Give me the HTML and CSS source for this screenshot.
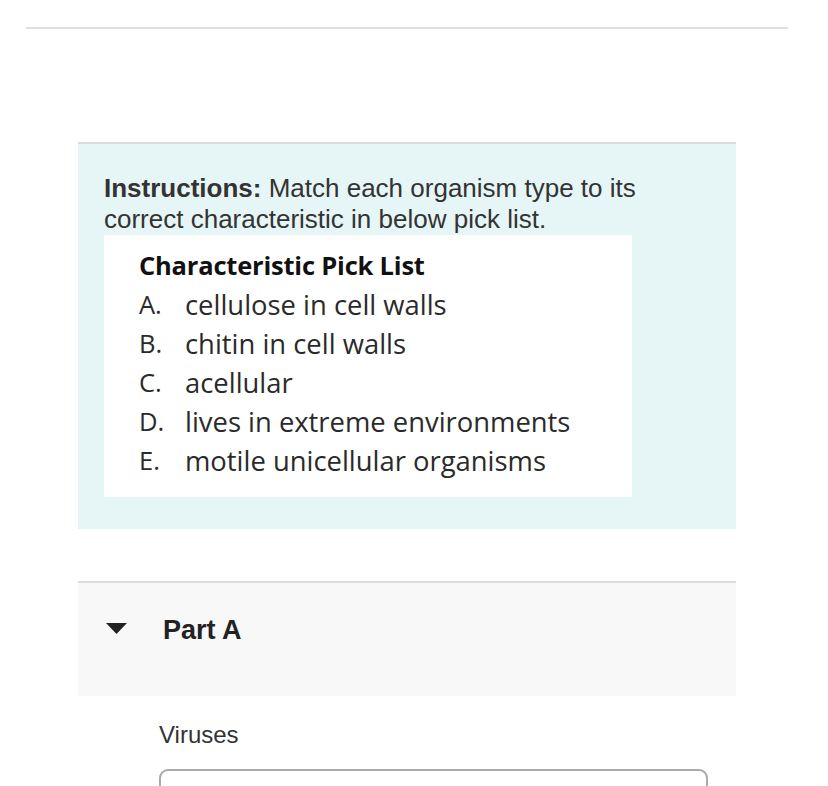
FILE: index.html
```html
<!DOCTYPE html>
<html lang="en">

<head>
    <meta charset="UTF-8">
    <meta name="viewport" content="width=device-width, initial-scale=1.0">
    <title>Part A</title>
    <link rel="stylesheet" href="styles.css">
</head>

<body>
    <div class="top-rule"></div>

    <main class="content">
        <section class="instructions">
            <p class="intro"><strong>Instructions:</strong> Match each organism type to its correct characteristic in below pick list.</p>

            <div class="pick-list">
                <div class="pick-title">Characteristic Pick List</div>
                <ol class="pick-items">
                    <li><span class="letter">A.</span>cellulose in cell walls</li>
                    <li><span class="letter">B.</span>chitin in cell walls</li>
                    <li><span class="letter">C.</span>acellular</li>
                    <li><span class="letter">D.</span>lives in extreme environments</li>
                    <li><span class="letter">E.</span>motile unicellular organisms</li>
                </ol>
            </div>
        </section>

        <section class="part">
            <div class="part-head">
                <svg class="caret" width="21" height="11" viewBox="0 0 21 11">
                    <path d="M0 0 H21 L10.5 11 Z" fill="#222" />
                </svg>
                <h2>Part A</h2>
            </div>
        </section>

        <div class="question">
            <label for="viruses">Viruses</label>
            <div class="answer-box" id="viruses"></div>
        </div>
    </main>
</body>

</html>
```

FILE: styles.css
```css
* {
    box-sizing: border-box;
}

body {
    margin: 0;
    font-family: 'Liberation Sans', Arial, sans-serif;
    color: #333;
    background-color: #fff;
    overflow: hidden;
}

.top-rule {
    height: 2px;
    background-color: #e0e0e0;
    margin: 27px 40px 0 26px;
}

.content {
    width: 658px;
    margin: 113px 0 0 78px;
}

.instructions {
    background-color: #e6f6f6;
    border-top: 2px solid #dcdcdc;
    padding: 29px 26px 32px;
}

.intro {
    margin: 0;
    max-width: 580px;
    font-size: 26px;
    line-height: 31px;
}

.pick-list {
    width: 528px;
    height: 262px;
    background-color: #fff;
    padding: 11px 0 0 35px;
    font-family: 'Open Sans', sans-serif;
    font-size: 27.4px;
    line-height: 39px;
    color: #2a2a2a;
}

.pick-title {
    font-size: 25.5px;
    font-weight: bold;
    letter-spacing: -0.2px;
    color: #111;
}

.pick-items {
    list-style: none;
    margin: 0;
    padding: 0;
}

.pick-items li {
    display: flex;
}

.letter {
    width: 46px;
    flex-shrink: 0;
    font-size: 25.5px;
}

.part {
    margin-top: 52px;
    border-top: 2px solid #dcdcdc;
    background-color: #f8f8f8;
    height: 115px;
    padding: 32px 0 0 28px;
}

.part-head {
    display: flex;
    align-items: flex-start;
}

.caret {
    margin-top: 8px;
    margin-right: 36px;
}

.part-head h2 {
    margin: 0;
    font-size: 27px;
    line-height: 31px;
    color: #222;
}

.question {
    padding: 24px 0 0 81px;
}

.question label {
    display: block;
    font-size: 24px;
    line-height: 30px;
}

.answer-box {
    margin-top: 19px;
    width: 549px;
    height: 80px;
    border: 2px solid #aaa;
    border-radius: 9px;
}
```
